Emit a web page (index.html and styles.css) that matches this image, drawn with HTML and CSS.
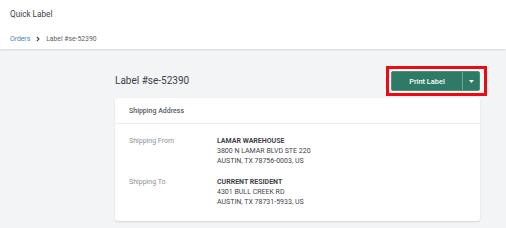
FILE: index.html
```html
<!DOCTYPE html>
<html>
<head>
<meta charset="utf-8">
<link rel="stylesheet" href="styles.css">
</head>
<body>
<header class="topbar">
  <div class="page-title">Quick Label</div>
  <nav class="crumbs">
    <a class="crumb-link">Orders</a>
    <svg class="crumb-sep" width="4" height="6" viewBox="0 0 4 6"><path d="M0.8 0.8 L3 3 L0.8 5.2" fill="none" stroke="#3a3f45" stroke-width="1.1"/></svg>
    <span class="crumb-current">Label #se-52390</span>
  </nav>
</header>
<main class="content">
  <div class="title-row">
    <h1 class="label-title">Label #se-52390</h1>
    <div class="btn-group">
      <button class="btn-main">Print Label</button>
      <button class="btn-caret"><svg width="5" height="3" viewBox="0 0 5 3"><path d="M0 0 H5 L2.5 3 Z" fill="#fff"/></svg></button>
    </div>
  </div>
  <section class="card">
    <div class="card-head">Shipping Address</div>
    <div class="card-body">
      <div class="addr-row">
        <div class="addr-label">Shipping From</div>
        <div class="addr-value">
          <div class="addr-name">LAMAR WAREHOUSE</div>
          <div>3800 N LAMAR BLVD STE 220</div>
          <div>AUSTIN, TX 78756-0003, US</div>
        </div>
      </div>
      <div class="addr-row">
        <div class="addr-label">Shipping To</div>
        <div class="addr-value">
          <div class="addr-name">CURRENT RESIDENT</div>
          <div>4301 BULL CREEK RD</div>
          <div>AUSTIN, TX 78731-5933, US</div>
        </div>
      </div>
    </div>
  </section>
</main>
</body>
</html>
```
FILE: styles.css
```css
html, body {
  margin: 0;
  padding: 0;
}
body {
  background: #f3f4f6;
  font-family: Roboto, "Liberation Sans", sans-serif;
  width: 506px;
  height: 228px;
  overflow: hidden;
}
.topbar {
  background: #ffffff;
  height: 49px;
  box-sizing: border-box;
  padding: 8px 10px 0;
  box-shadow: 0 1px 2px rgba(0, 0, 0, 0.12);
  position: relative;
}
.page-title {
  font-size: 8.2px;
  line-height: 12px;
  color: #3a3f45;
}
.crumbs {
  margin-top: 14px;
  display: flex;
  align-items: center;
  font-size: 6.8px;
  line-height: 10px;
}
.crumb-link {
  color: #3b84c1;
}
.crumb-sep {
  margin: 0 6px 0 6px;
}
.crumb-current {
  color: #5b6067;
}
.content {
  padding: 22px 0 0 115px;
  width: 365px;
}
.title-row {
  display: flex;
  align-items: center;
  justify-content: space-between;
  height: 20px;
}
.label-title {
  margin: 0;
  font-size: 10px;
  font-weight: 400;
  color: #3c4047;
  line-height: 12px;
}
.btn-group {
  position: relative;
  display: flex;
  height: 20px;
  background: #2e7a66;
  border: 1px solid #4f8f7e;
  border-radius: 2px;
  box-sizing: border-box;
}
.btn-group::after {
  content: "";
  position: absolute;
  left: -6px;
  top: -6px;
  right: -8px;
  bottom: -6px;
  border: 3px solid #ee0a12;
}
.btn-main, .btn-caret {
  background: transparent;
  border: 0;
  padding: 0;
  margin: 0;
  color: #ffffff;
  font-family: Roboto, "Liberation Sans", sans-serif;
  font-size: 7.4px;
  font-weight: 500;
  display: flex;
  align-items: center;
  justify-content: center;
}
.btn-main {
  width: 70px;
}
.btn-caret {
  width: 17px;
  border-left: 1px solid #6fa495;
}
.card {
  margin-top: 7px;
  background: #ffffff;
  border-radius: 3px;
  box-shadow: 0 1px 2px rgba(0, 0, 0, 0.13);
}
.card-head {
  height: 26px;
  box-sizing: border-box;
  padding-left: 14px;
  display: flex;
  align-items: center;
  font-size: 7px;
  font-weight: 500;
  color: #565d67;
  border-bottom: 1px solid #eceef1;
}
.card-body {
  padding: 12px 14px 14px;
  display: flex;
  flex-direction: column;
  gap: 11px;
}
.addr-row {
  display: flex;
  font-size: 7px;
  line-height: 10px;
}
.addr-label {
  width: 88px;
  color: #8c9199;
}
.addr-value {
  color: #3f434a;
}
.addr-name {
  font-weight: 700;
}
```
